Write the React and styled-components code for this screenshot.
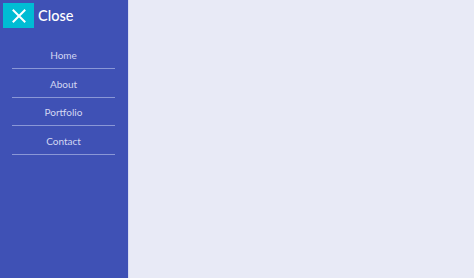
import React from "react";
import styled, { createGlobalStyle } from "styled-components";

const Global = createGlobalStyle`
  html, body { margin: 0; padding: 0; height: 100%; }
  body { background: #e8eaf6; font-family: Lato, "Open Sans", "Liberation Sans", sans-serif; }
  #root { height: 100%; }
`;

const Page = styled.div`
  display: flex;
  height: 278px;
  width: 474px;
`;

const Sidebar = styled.nav`
  width: 128px;
  background: #3f51b5;
  display: flex;
  flex-direction: column;
  border-right: 1px solid #d7dbf3;
`;

const Header = styled.div`
  display: flex;
  align-items: center;
  gap: 4px;
  padding: 3px 0 0 3px;
`;

const CloseButton = styled.button`
  width: 31px;
  height: 25px;
  background: #00bcd4;
  border: none;
  padding: 0;
  display: flex;
  align-items: center;
  justify-content: center;
  cursor: pointer;
`;

const CloseLabel = styled.span`
  color: #ffffff;
  font-size: 14.5px;
  font-weight: 500;
`;

const Menu = styled.ul`
  list-style: none;
  margin: 12.5px 13px 0 12px;
  padding: 0;
`;

const Item = styled.li`
  height: 28.5px;
  box-sizing: border-box;
  border-bottom: 1px solid #8a97d6;
  display: flex;
  align-items: center;
  justify-content: center;
  padding-top: 2px;
  color: #d3d7f2;
  font-size: 10px;
`;

const Main = styled.main`
  flex: 1;
  background: #e8eaf6;
`;

export default function App() {
  return (
    <>
      <Global />
      <Page>
        <Sidebar>
          <Header>
            <CloseButton aria-label="Close">
              <svg width="14" height="14" viewBox="0 0 14 14">
                <path d="M1.5 1.5 L12.5 12.5 M12.5 1.5 L1.5 12.5" stroke="#fff" strokeWidth="2" strokeLinecap="square" />
              </svg>
            </CloseButton>
            <CloseLabel>Close</CloseLabel>
          </Header>
          <Menu>
            {["Home", "About", "Portfolio", "Contact"].map((t) => (
              <Item key={t}>{t}</Item>
            ))}
          </Menu>
        </Sidebar>
        <Main />
      </Page>
    </>
  );
}
